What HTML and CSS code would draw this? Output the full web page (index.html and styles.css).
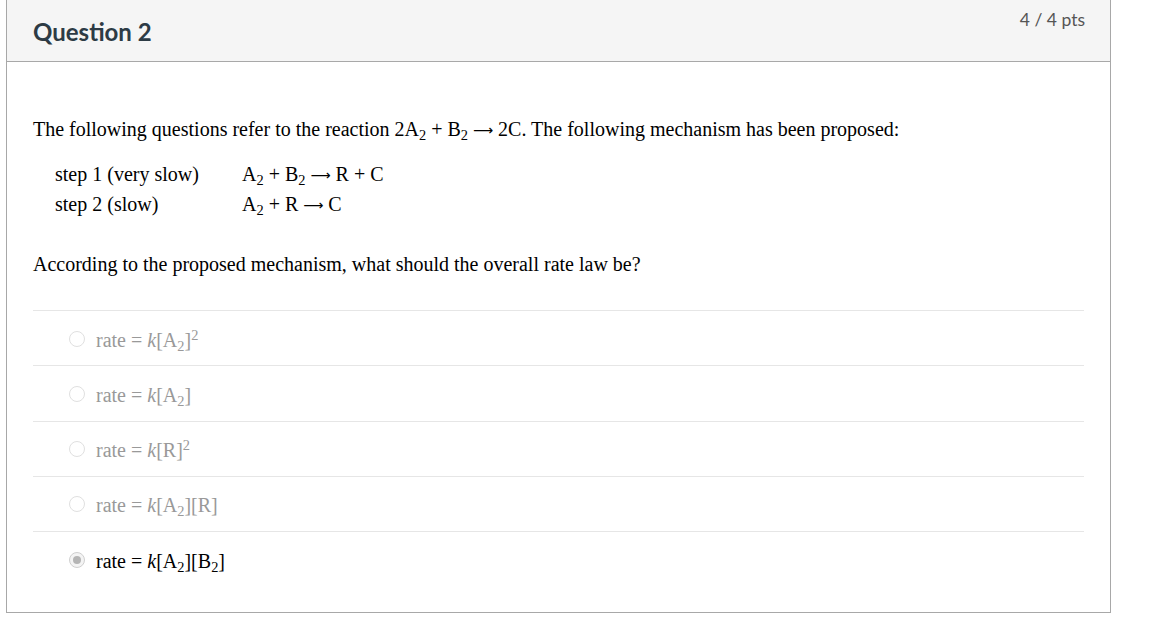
FILE: index.html
```html
<!DOCTYPE html>
<html>
<head>
<meta charset="utf-8">
<link rel="stylesheet" href="styles.css">
</head>
<body>
<div class="card">
  <div class="header">
    <div class="title">Question 2</div>
    <div class="pts">4 / 4 pts</div>
  </div>
  <div class="body">
    <p class="intro">The following questions refer to the reaction 2A<sub>2</sub> + B<sub>2</sub> <span class="arr">⟶</span> 2C. The following mechanism has been proposed:</p>
    <div class="steps">
      <div>step 1 (very slow)</div><div>A<sub>2</sub> + B<sub>2</sub> <span class="arr">⟶</span> R + C</div>
      <div>step 2 (slow)</div><div>A<sub>2</sub> + R <span class="arr">⟶</span> C</div>
    </div>
    <p class="ask">According to the proposed mechanism, what should the overall rate law be?</p>
    <div class="options">
      <div class="opt"><span class="radio"></span><span>rate = <i>k</i>[A<sub>2</sub>]<sup>2</sup></span></div>
      <div class="opt"><span class="radio"></span><span>rate = <i>k</i>[A<sub>2</sub>]</span></div>
      <div class="opt"><span class="radio"></span><span>rate = <i>k</i>[R]<sup>2</sup></span></div>
      <div class="opt"><span class="radio"></span><span>rate = <i>k</i>[A<sub>2</sub>][R]</span></div>
      <div class="opt selected"><span class="radio checked"></span><span>rate = <i>k</i>[A<sub>2</sub>][B<sub>2</sub>]</span></div>
    </div>
  </div>
</div>
</body>
</html>
```
FILE: styles.css
```css
html, body {
  margin: 0;
  padding: 0;
  background: #fff;
}
.card {
  margin-left: 6px;
  width: 1103px;
  border: 1px solid #a8a8a8;
  border-top: none;
  background: #fff;
}
.header {
  height: 61px;
  background: #f5f5f5;
  border-bottom: 1px solid #a8a8a8;
  display: flex;
  justify-content: space-between;
  align-items: flex-start;
  padding: 0 25px 0 26px;
  font-family: Lato, "Liberation Sans", sans-serif;
}
.title {
  font-weight: bold;
  font-size: 24px;
  color: #2d3b45;
  margin-top: 17px;
  line-height: 30px;
}
.pts {
  font-size: 17.5px;
  color: #555;
  margin-top: 10px;
  line-height: 20px;
}
.body {
  padding: 52px 26px 26px 26px;
  font-family: "Liberation Serif", "Times New Roman", serif;
  font-size: 20px;
  color: #000;
}
p {
  margin: 0;
  height: 30px;
  line-height: 30px;
}
.arr {
  font-family: "DejaVu Sans", sans-serif;
  font-size: 14px;
  line-height: 0;
  vertical-align: 0.1em;
}
sub {
  font-size: 0.72em;
  vertical-align: -0.25em;
  line-height: 0;
}
sup {
  font-size: 0.72em;
  vertical-align: 0.5em;
  line-height: 0;
}
.steps {
  display: grid;
  grid-template-columns: 187px auto;
  grid-auto-rows: 30px;
  line-height: 30px;
  margin: 15px 0 0 22px;
}
.ask {
  margin-top: 30px;
}
.options {
  margin-top: 31px;
}
.opt {
  border-top: 1px solid #e6e6e6;
  height: 51.25px;
  padding-top: 3px;
  display: flex;
  align-items: center;
  padding-left: 36px;
  color: #999;
}
.opt span {
  line-height: 24px;
}
.opt.selected {
  color: #000;
}
.radio {
  width: 14px;
  height: 14px;
  border: 1px solid #e0e0e0;
  border-radius: 50%;
  margin-right: 11px;
  margin-top: -2px;
  background: #fff;
  position: relative;
  flex: none;
}
.radio.checked {
  border-color: #cfcfcf;
  background: #f4f4f4;
}
.radio.checked::after {
  content: "";
  position: absolute;
  left: 3px;
  top: 3px;
  width: 8px;
  height: 8px;
  border-radius: 50%;
  background: #b5b5b5;
}
```
